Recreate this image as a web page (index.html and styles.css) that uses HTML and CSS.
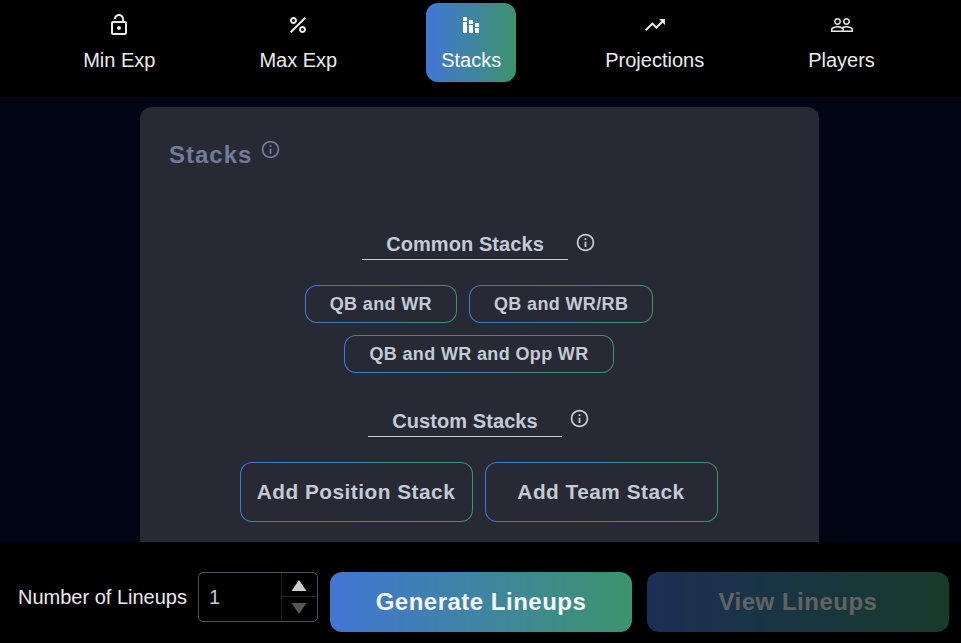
FILE: index.html
```html
<!DOCTYPE html>
<html lang="en">
  <head>
    <meta charset="UTF-8" />
    <meta name="viewport" content="width=device-width, initial-scale=1.0" />
    <title>Lineup Optimizer</title>
    <link rel="stylesheet" href="styles.css">
  </head>

  <body>
    <nav class="navbar">
      <button class="nav-item">
        <svg class="nav-icon" viewBox="0 0 24 24"><path d="M12 17c1.1 0 2-.9 2-2s-.9-2-2-2-2 .9-2 2 .9 2 2 2zm6-9h-1V6c0-2.76-2.24-5-5-5S7 3.24 7 6h1.9c0-1.71 1.39-3.1 3.1-3.1s3.1 1.39 3.1 3.1v2H6c-1.1 0-2 .9-2 2v10c0 1.1.9 2 2 2h12c1.1 0 2-.9 2-2V10c0-1.1-.9-2-2-2zm0 12H6V10h12v10z"/></svg>
        <span>Min Exp</span>
      </button>
      <button class="nav-item">
        <svg class="nav-icon" viewBox="0 0 24 24"><path d="M7.5 4C5.57 4 4 5.57 4 7.5S5.57 11 7.5 11 11 9.43 11 7.5 9.43 4 7.5 4zm0 5C6.67 9 6 8.33 6 7.5S6.67 6 7.5 6 9 6.67 9 7.5 8.33 9 7.5 9zM16.5 13c-1.93 0-3.5 1.57-3.5 3.5s1.57 3.5 3.5 3.5 3.5-1.57 3.5-3.5-1.57-3.5-3.5-3.5zm0 5c-.83 0-1.5-.67-1.5-1.5s.67-1.5 1.5-1.5 1.5.67 1.5 1.5-.67 1.5-1.5 1.5zM5.41 20 4 18.59 18.59 4 20 5.41z"/></svg>
        <span>Max Exp</span>
      </button>
      <button class="nav-item active">
        <svg class="nav-icon" viewBox="0 0 24 24"><path d="M4 9h4v11H4zM4 4h4v4H4zM10 7h4v4h-4zM10 12h4v8h-4zM16 10h4v4h-4zM16 15h4v5h-4z"/></svg>
        <span>Stacks</span>
      </button>
      <button class="nav-item">
        <svg class="nav-icon" viewBox="0 0 24 24"><path d="m16 6 2.29 2.29-4.88 4.88-4-4L2 16.59 3.41 18l6-6 4 4 6.3-6.29L22 12V6z"/></svg>
        <span>Projections</span>
      </button>
      <button class="nav-item">
        <svg class="nav-icon" viewBox="0 0 24 24"><path d="M16.5 13c-1.2 0-3.07.34-4.5 1-1.43-.67-3.3-1-4.5-1C5.33 13 1 14.08 1 16.25V19h22v-2.75c0-2.17-4.33-3.25-6.5-3.25zm-4 4.5h-10v-1.25c0-.54 2.56-1.75 5-1.75s5 1.21 5 1.75v1.25zm9 0H14v-1.25c0-.46-.2-.86-.52-1.22.88-.3 1.96-.53 3.02-.53 2.44 0 5 1.21 5 1.75v1.25zM7.5 12c1.93 0 3.5-1.57 3.5-3.5S9.43 5 7.5 5 4 6.57 4 8.5 5.57 12 7.5 12zm0-5.5c1.1 0 2 .9 2 2s-.9 2-2 2-2-.9-2-2 .9-2 2-2zm9 5.5c1.93 0 3.5-1.57 3.5-3.5S18.43 5 16.5 5 13 6.57 13 8.5s1.57 3.5 3.5 3.5zm0-5.5c1.1 0 2 .9 2 2s-.9 2-2 2-2-.9-2-2 .9-2 2-2z"/></svg>
        <span>Players</span>
      </button>
    </nav>

    <main class="content">
      <div class="panel">
        <div class="panel-title">
          <h2>Stacks</h2>
          <svg class="info-icon" viewBox="0 0 24 24"><path d="M11 7h2v2h-2zm0 4h2v6h-2zm1-9C6.48 2 2 6.48 2 12s4.48 10 10 10 10-4.48 10-10S17.52 2 12 2zm0 18c-4.41 0-8-3.59-8-8s3.59-8 8-8 8 3.59 8 8-3.59 8-8 8z"/></svg>
        </div>

        <div class="section-title">
          <h3>Common Stacks</h3>
          <svg class="info-icon" viewBox="0 0 24 24"><path d="M11 7h2v2h-2zm0 4h2v6h-2zm1-9C6.48 2 2 6.48 2 12s4.48 10 10 10 10-4.48 10-10S17.52 2 12 2zm0 18c-4.41 0-8-3.59-8-8s3.59-8 8-8 8 3.59 8 8-3.59 8-8 8z"/></svg>
        </div>
        <div class="common-stacks">
          <button class="outline-btn">QB and WR</button>
          <button class="outline-btn">QB and WR/RB</button>
          <button class="outline-btn">QB and WR and Opp WR</button>
        </div>

        <div class="section-title">
          <h3>Custom Stacks</h3>
          <svg class="info-icon" viewBox="0 0 24 24"><path d="M11 7h2v2h-2zm0 4h2v6h-2zm1-9C6.48 2 2 6.48 2 12s4.48 10 10 10 10-4.48 10-10S17.52 2 12 2zm0 18c-4.41 0-8-3.59-8-8s3.59-8 8-8 8 3.59 8 8-3.59 8-8 8z"/></svg>
        </div>
        <div class="custom-stacks">
          <button class="outline-btn large">Add Position Stack</button>
          <button class="outline-btn large">Add Team Stack</button>
        </div>
      </div>
    </main>

    <footer class="footer">
      <label class="lineups-label" for="num-lineups">Number of Lineups</label>
      <div class="number-input">
        <input id="num-lineups" type="text" value="1" />
        <div class="stepper">
          <button class="step"><svg viewBox="0 0 16 11"><path d="M8 0l7.5 11H.5z"/></svg></button>
          <button class="step down"><svg viewBox="0 0 16 11"><path d="M.5 0h15L8 11z"/></svg></button>
        </div>
      </div>
      <button class="main-btn">Generate Lineups</button>
      <button class="main-btn" disabled>View Lineups</button>
    </footer>
  </body>
</html>
```
FILE: styles.css
```css
* {
  box-sizing: border-box;
}

body {
  margin: 0;
  height: 100vh;
  display: flex;
  flex-direction: column;
  overflow: hidden;
  background: #020514;
  color: #ebebeb;
  font-family: "Liberation Sans", Arial, sans-serif;
  font-size: 20px;
}

button,
input {
  font-family: inherit;
  color: inherit;
  background: none;
  border: none;
  margin: 0;
  padding: 0;
}

h2,
h3 {
  margin: 0;
}

svg {
  display: block;
  fill: currentColor;
}

.navbar {
  flex: none;
  height: 97px;
  padding: 3px 3px 0 0;
  display: flex;
  justify-content: center;
  align-items: flex-start;
  gap: 74px;
  background: #000;
}

.nav-item {
  height: 79px;
  padding: 10px 15px 0;
  display: flex;
  flex-direction: column;
  align-items: center;
  gap: 11px;
  border-radius: 12px;
  font-size: 20px;
  line-height: 24px;
}

.nav-item.active {
  background: linear-gradient(to right, #4276d6, #3c936c);
  color: #fff;
}

.nav-icon {
  width: 24px;
  height: 24px;
}

.content {
  flex: 1;
  min-height: 0;
  padding: 10px 142px 0 140px;
  overflow: hidden;
}

.panel {
  height: 480px;
  padding: 30px 31px 30px 29px;
  border-radius: 12px;
  background: #272a35;
  color: #c3cbd5;
}

.info-icon {
  width: 21px;
  height: 21px;
}

.panel-title {
  display: flex;
  align-items: flex-start;
  gap: 8px;
  height: 92px;
  color: #717b9a;
}

.panel-title h2 {
  font-size: 24px;
  line-height: 36px;
  letter-spacing: 1px;
}

.panel-title .info-icon {
  margin-top: 2px;
}

.section-title {
  padding-left: 1px;
  display: flex;
  justify-content: center;
  align-items: flex-start;
  gap: 7px;
}

.section-title h3 {
  height: 31px;
  padding: 0 24px;
  border-bottom: 1px solid #c3cbd5;
  font-size: 20px;
  line-height: 30px;
  letter-spacing: 0.08px;
}

.section-title .info-icon {
  margin-top: 3px;
}

.common-stacks {
  width: 400px;
  margin: 25px auto 33px;
  padding-left: 1px;
  display: flex;
  flex-wrap: wrap;
  justify-content: center;
  gap: 12px;
}

.common-stacks + .section-title .info-icon {
  margin-top: 2px;
}

.custom-stacks {
  margin-top: 25px;
  display: flex;
  justify-content: center;
  gap: 12px;
}

.outline-btn {
  height: 38px;
  padding: 0 24px;
  border: 1px solid transparent;
  border-radius: 12px;
  background: linear-gradient(#272a35, #272a35) padding-box,
    linear-gradient(to right, #4276d6, #3c936c) border-box;
  font-size: 18px;
  font-weight: bold;
  letter-spacing: 0.02em;
}

.outline-btn.large {
  width: 233px;
  height: 60px;
  padding: 0;
  font-size: 20.8px;
  letter-spacing: 0.5px;
}

.footer {
  flex: none;
  height: 101px;
  padding: 30px 12px 0 18px;
  display: flex;
  align-items: flex-start;
  background: #000;
}

.lineups-label {
  flex: 1;
  line-height: 50px;
  white-space: nowrap;
}

.number-input {
  width: 120px;
  height: 50px;
  margin-right: 12px;
  display: flex;
  border: 1px solid #4a5364;
  border-radius: 5px;
}

.number-input input {
  width: 82px;
  padding-left: 10px;
  color: #c3cbd5;
  font-size: 20px;
}

.stepper {
  flex: 1;
  margin-top: 1px;
  display: flex;
  flex-direction: column;
  border-left: 1px solid #222;
}

.step {
  height: 22px;
  padding-right: 2px;
  display: flex;
  justify-content: center;
  align-items: center;
  color: #ccc;
}

.step svg {
  width: 16px;
  height: 11px;
}

.step.down {
  height: 25px;
  padding-bottom: 1px;
  border-top: 1px solid #222;
  color: #555;
}

.main-btn {
  width: 302px;
  height: 60px;
  border-radius: 12px;
  background: linear-gradient(to right, #4276d6, #3c936c);
  color: #f4f6f8;
  font-size: 24px;
  font-weight: bold;
  letter-spacing: 0.5px;
}

.main-btn + .main-btn {
  margin-left: 15px;
}

.main-btn:disabled {
  opacity: 0.4;
}
```
